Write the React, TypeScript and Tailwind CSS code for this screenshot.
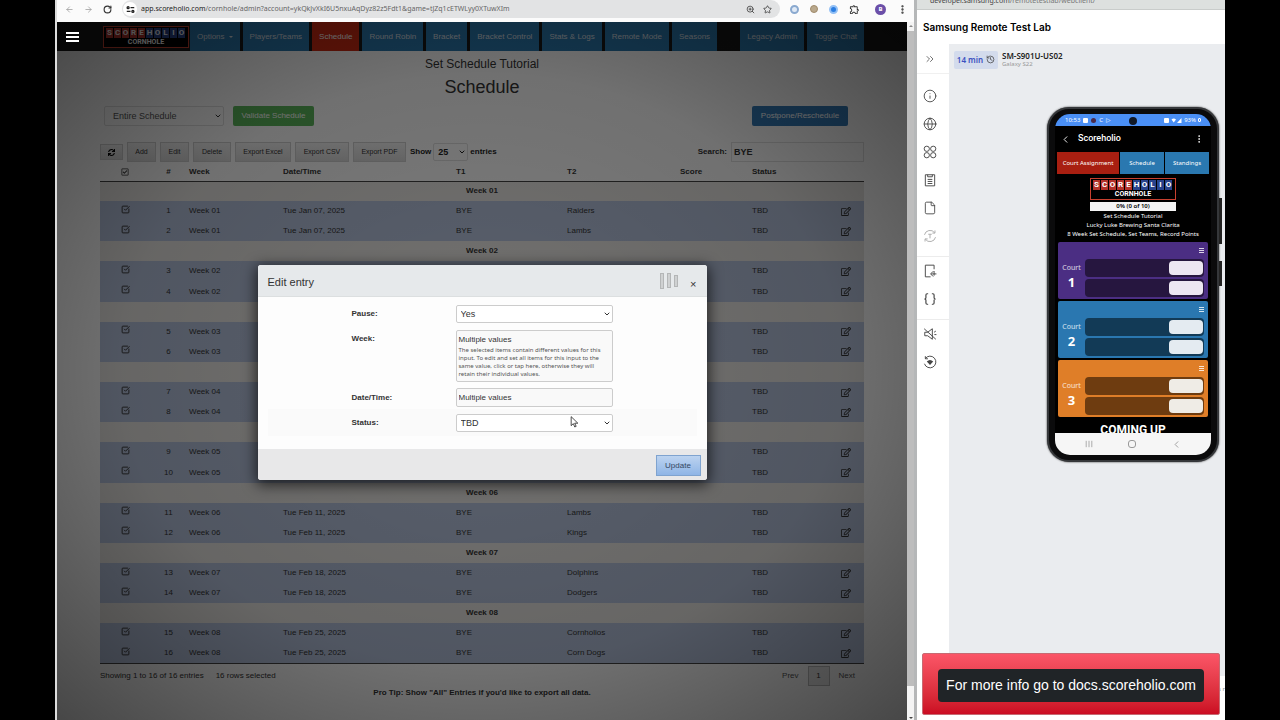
import { ReactNode } from "react"
import {
  ArrowLeft, ArrowRight, Braces, ChevronDown, ChevronLeft, ChevronsRight, EllipsisVertical,
  File, Globe, History, Info, RotateCw, SquareCheckBig, Star, ZoomIn,
} from "lucide-react"
import { FaRegCheckSquare, FaRegEdit, FaSync } from "react-icons/fa"
import { MdOutlineExtension } from "react-icons/md"

const navItems = ["Players/Teams", "Schedule", "Round Robin", "Bracket", "Bracket Control", "Stats & Logs", "Remote Mode", "Seasons"]

const weeks = [
  { week: "Week 01", date: "Tue Jan 07, 2025", teams: ["Raiders", "Lambs"] },
  { week: "Week 02", date: "Tue Jan 14, 2025", teams: ["Kings", "Dolphins"] },
  { week: "Week 03", date: "Tue Jan 21, 2025", teams: ["Dodgers", "Cornholios"] },
  { week: "Week 04", date: "Tue Jan 28, 2025", teams: ["Corn Dogs", "Raiders"] },
  { week: "Week 05", date: "Tue Feb 04, 2025", teams: ["Raiders", "Dolphins"] },
  { week: "Week 06", date: "Tue Feb 11, 2025", teams: ["Lambs", "Kings"] },
  { week: "Week 07", date: "Tue Feb 18, 2025", teams: ["Dolphins", "Dodgers"] },
  { week: "Week 08", date: "Tue Feb 25, 2025", teams: ["Cornholios", "Corn Dogs"] },
]

const courts = [
  { n: 1, card: "bg-[#4b2e83]", slot: "bg-[#26163f]", score: "bg-[#ece6f2]" },
  { n: 2, card: "bg-[#2a77b0]", slot: "bg-[#123a56]", score: "bg-[#e4ebf1]" },
  { n: 3, card: "bg-[#df7e28]", slot: "bg-[#6e3c10]", score: "bg-[#efece6]" },
]

function Logo() {
  return (
    <div className="flex h-[22px] w-[86px] shrink-0 flex-col items-center justify-center gap-px border border-[#c8402f] bg-black font-['Roboto']">
      <div className="flex">
        {"SCOREHOLIO".split("").map((c, i) => (
          <span
            key={i}
            className={`w-[8px] border-r border-black text-center text-[8px] leading-[10px] font-bold text-white ${i < 5 ? "bg-[#b3322a]" : "bg-[#28438c]"}`}
          >
            {c}
          </span>
        ))}
      </div>
      <span className="text-[7px] leading-[7px] font-bold text-white">CORNHOLE</span>
    </div>
  )
}

function Select({ id, label, value, className }: { id: string; label?: string; value: string; className: string }) {
  return (
    <span className="relative inline-flex">
      <select id={id} aria-label={label} className={`appearance-none rounded-[2px] border ${className}`}>
        <option>{value}</option>
      </select>
      <ChevronDown className="pointer-events-none absolute top-1/2 right-[2px] h-2 w-2 -translate-y-1/2" strokeWidth={3} />
    </span>
  )
}

function ToolButton({ children, label, className }: { children: ReactNode; label?: string; className: string }) {
  return (
    <button
      aria-label={label}
      className={`flex items-center justify-center border border-[#d0d0d0] bg-linear-to-b from-[#f4f4f4] to-[#dadada] text-[7px] ${className}`}
    >
      {children}
    </button>
  )
}

function BrowserBar() {
  return (
    <div className="flex h-[22px] shrink-0 items-center bg-[#fbfbfb] pb-1 font-['Noto_Sans'] text-[#333]">
      <div className="flex w-[65px] items-center justify-between pr-[10px] pl-2">
        <ArrowLeft className="h-[9px] w-[9px] text-[#999]" />
        <ArrowRight className="h-[9px] w-[9px] text-[#999]" />
        <RotateCw className="h-[9px] w-[9px]" strokeWidth={3} />
      </div>
      <div className="flex h-[18px] min-w-0 flex-1 items-center rounded-full bg-[#e2e3e4] pr-2 pl-px">
        <span className="mr-1 flex h-[14px] w-[14px] items-center justify-center rounded-full bg-white">
          <svg viewBox="0 0 12 12" className="h-[9px] w-[9px]" fill="none" stroke="#222" strokeWidth="1.8">
            <path d="M6 3.5h5M1 8.5h5" />
            <circle cx="2.8" cy="3.5" r="1.3" />
            <circle cx="9.2" cy="8.5" r="1.3" />
          </svg>
        </span>
        <span className="flex-1 truncate text-[7px] leading-[14px] text-[#666]">
          <span className="text-[#222]">app.scoreholio.com</span>
          /cornhole/admin?account=ykQkJvXkI6U5nxuAqDyz82z5Fdt1&amp;game=tJZq1cETWLyy0XTuwXIm
        </span>
        <ZoomIn className="mr-2 h-[9px] w-[9px]" />
        <Star className="h-[9px] w-[9px]" />
      </div>
      <div className="flex items-center gap-[11px] pr-[6px] pl-[10px]">
        <span className="h-[9px] w-[9px] rounded-full border-2 border-[#8aa9cf] bg-[#dfe9f5]" />
        <span className="h-[8px] w-[8px] rounded-full border border-[#a08b6c] bg-[#b9a88c]" />
        <span className="h-[9px] w-[9px] rounded-full border-2 border-[#93c0f5] bg-[#2a7de1]" />
        <MdOutlineExtension className="h-[11px] w-[11px]" />
        <span className="ml-1 flex h-[11px] w-[11px] items-center justify-center rounded-full bg-[#6b4fa8] text-[6px] font-bold text-white">B</span>
        <EllipsisVertical className="h-[11px] w-[11px]" strokeWidth={3} />
      </div>
    </div>
  )
}

function Navbar() {
  return (
    <nav className="flex h-[29px] items-stretch bg-[#161616] text-[8px] text-[#d8dee3]">
      <div className="flex w-[46px] items-center pl-[9px]">
        <button aria-label="Menu" className="relative z-20 flex flex-col gap-[2px]">
          <span className="h-[2px] w-[13px] bg-white" />
          <span className="h-[2px] w-[13px] bg-white" />
          <span className="h-[2px] w-[13px] bg-white" />
        </button>
      </div>
      <div className="flex items-center pr-px">
        <Logo />
      </div>
      <div className="flex gap-[3px] whitespace-nowrap">
        <a href="#options" className="flex items-center gap-1 bg-[#2a78ad] px-[7px]">
          Options
          <span className="border-x-2 border-t-2 border-x-transparent" />
        </a>
        {navItems.map(item => (
          <a
            key={item}
            href="#section"
            className={`flex items-center px-[7px] ${item === "Schedule" ? "bg-[#cf2a12] text-white" : "bg-[#2a78ad]"}`}
          >
            {item}
          </a>
        ))}
        <a href="#legacy" className="ml-5 flex items-center bg-[#2a78ad] px-[7px]">Legacy Admin</a>
        <a href="#chat" className="flex items-center bg-[#2a78ad] px-[7px]">Toggle Chat</a>
      </div>
    </nav>
  )
}

function ScheduleTable() {
  return (
    <table className="mt-px h-[501px] w-full table-fixed border-b border-[#444] text-left">
      <colgroup>
        <col className="w-[50px]" />
        <col className="w-[37px]" />
        <col className="w-[94px]" />
        <col />
        <col className="w-[111px]" />
        <col className="w-[113px]" />
        <col className="w-[72px]" />
        <col className="w-[77px]" />
        <col className="w-[37px]" />
      </colgroup>
      <thead>
        <tr className="h-[18px] border-b border-[#444]">
          <th>
            <label className="flex justify-center">
              <input type="checkbox" aria-label="Select all" defaultChecked className="sr-only" />
              <FaRegCheckSquare className="h-2 w-2" />
            </label>
          </th>
          <th className="text-center">#</th>
          <th className="px-[2px]">Week</th>
          <th className="px-[2px]">Date/Time</th>
          <th className="px-[2px]">T1</th>
          <th className="px-[2px]">T2</th>
          <th className="px-[2px]">Score</th>
          <th className="px-[2px]">Status</th>
          <th />
        </tr>
      </thead>
      {weeks.map((w, i) => (
        <tbody key={w.week}>
          <tr className="h-5 bg-[#e9e7e4]">
            <th colSpan={9} className="text-center">{w.week}</th>
          </tr>
          {w.teams.map((team, j) => (
            <tr key={team} className="h-5 bg-[#b6c3dd]">
              <td>
                <label className="flex justify-center pb-1">
                  <input type="checkbox" aria-label={`Select ${i * 2 + j + 1}`} defaultChecked className="sr-only" />
                  <SquareCheckBig className="h-[9px] w-[9px]" strokeWidth={2.5} />
                </label>
              </td>
              <td className="text-center">{i * 2 + j + 1}</td>
              <td className="px-[2px]">{w.week}</td>
              <td className="px-[2px]">{w.date}</td>
              <td className="px-[2px]">BYE</td>
              <td className="px-[2px]">{team}</td>
              <td />
              <td className="px-[2px]">TBD</td>
              <td>
                <button aria-label="Edit row" className="mx-auto block">
                  <FaRegEdit className="h-[9px] w-[10px]" />
                </button>
              </td>
            </tr>
          ))}
        </tbody>
      ))}
    </table>
  )
}

function EditModal() {
  return (
    <form className="relative flex h-[215px] w-[449px] flex-col overflow-hidden rounded-[3px] bg-[#fdfdfd] text-[8px] text-[#333] shadow-[0_3px_14px_2px_rgba(0,0,0,0.65)]">
      <div className="flex h-8 items-center border-b border-[#dcdfe0] bg-[#e6e9eb] px-[10px]">
        <h2 className="flex-1 pt-[2px] text-[11px]">Edit entry</h2>
        <div className="mr-3 flex items-center gap-[3px]">
          <span className="h-4 w-1 border border-[#b4b6b7] bg-[#cfd1d2]" />
          <span className="h-[15px] w-1 border border-[#b4b6b7] bg-[#cfd1d2]" />
          <span className="h-3 w-1 border border-[#b4b6b7] bg-[#cfd1d2]" />
        </div>
        <button type="button" aria-label="Close" className="pt-2 text-[11px] leading-[11px]">×</button>
      </div>
      <div className="flex flex-1 flex-col px-[10px] pt-1">
        <div className="flex h-[25px] items-center pl-[84px]">
          <label htmlFor="pause" className="w-[104px] font-bold">Pause:</label>
          <Select id="pause" value="Yes" className="h-[18px] w-[157px] border-[#ccc] bg-white pl-1 text-[9px]" />
        </div>
        <div className="flex h-[60px] items-start pt-1 pl-[84px]">
          <span className="w-[104px] pt-1 font-bold">Week:</span>
          <button type="button" className="h-[52px] w-[157px] rounded-[2px] border border-[#ccc] bg-[#f9f9f9] pl-[2px] text-left whitespace-nowrap">
            <span className="block leading-[10px]">Multiple values</span>
            <span className="block pt-px font-['Noto_Sans'] text-[6px] leading-[8px] text-[#555]">
              The selected items contain different values for this
              <br />
              input. To edit and set all items for this input to the
              <br />
              same value, click or tap here, otherwise they will
              <br />
              retain their individual values.
            </span>
          </button>
        </div>
        <div className="flex h-[23px] items-center pl-[84px]">
          <label htmlFor="date" className="w-[104px] font-bold">Date/Time:</label>
          <input id="date" readOnly value="Multiple values" className="h-[19px] w-[157px] rounded-[2px] border border-[#ccc] bg-[#f9f9f9] px-[2px]" />
        </div>
        <div className="flex h-[27px] items-center bg-[#fafafa] pl-[84px]">
          <label htmlFor="status" className="w-[104px] font-bold">Status:</label>
          <Select id="status" value="TBD" className="h-[18px] w-[157px] border-[#ccc] bg-white pl-1 text-[9px]" />
        </div>
      </div>
      <div className="flex h-[31px] items-center justify-end bg-[#e8e8e9] px-[6px] pt-[2px]">
        <button type="button" className="h-[21px] w-[45px] border border-[#7fa3cf] bg-linear-to-b from-[#bcd3f0] to-[#8fb5e6] text-[#33475f]">
          Update
        </button>
      </div>
      <svg viewBox="0 0 12 18" className="absolute top-[151px] left-[312px] h-[12px] w-[9px]" fill="white" stroke="#222" strokeWidth="1.2">
        <path d="M1 1v13.5l3.2-3 2.2 5 2.1-1-2.2-4.7H11z" />
      </svg>
    </form>
  )
}

function AdminWindow() {
  return (
    <section className="flex min-w-0 flex-1 flex-col border-l-2 border-[#ddd]">
      <BrowserBar />
      <div className="flex min-h-0 flex-1">
        <div className="relative min-w-0 flex-1 overflow-hidden bg-white font-['Liberation_Sans',sans-serif] text-[8px] leading-[10px] text-[#333]">
          <Navbar />
          <main className="px-[43px]">
            <p className="pt-[6px] text-center text-[12px] leading-[14px]">Set Schedule Tutorial</p>
            <h1 className="mt-[5px] text-center text-[18px] leading-[22px]">Schedule</h1>
            <div className="mt-2 flex items-center gap-[9px]">
              <Select id="range" label="Schedule range" value="Entire Schedule" className="ml-1 h-5 w-[120px] border-[#e0e0e0] pl-2 text-[9px] text-[#555]" />
              <button className="h-5 w-[81px] rounded-[2px] bg-[#5cb85c] text-white">Validate Schedule</button>
              <button className="mr-4 ml-auto h-5 w-[96px] rounded-[2px] bg-[#337ab7] text-white">Postpone/Reschedule</button>
            </div>
            <div className="mt-4 flex h-5 items-center gap-1">
              <ToolButton label="Refresh" className="h-4 w-[23px]"><FaSync className="h-[7px] w-[7px] text-black" /></ToolButton>
              <ToolButton className="h-5 w-[29px]">Add</ToolButton>
              <ToolButton className="h-5 w-[29px]">Edit</ToolButton>
              <ToolButton className="h-5 w-[38px]">Delete</ToolButton>
              <ToolButton className="h-5 w-[56px]">Export Excel</ToolButton>
              <ToolButton className="h-5 w-[54px]">Export CSV</ToolButton>
              <ToolButton className="h-5 w-[53px]">Export PDF</ToolButton>
              <div className="flex items-center gap-[2px] font-bold text-[#222]">
                <label htmlFor="length">Show</label>
                <Select id="length" value="25" className="h-[18px] w-[35px] border-[#e0e0e0] pl-1 text-[9px] font-bold" />
                <span>entries</span>
              </div>
              <label htmlFor="search" className="ml-auto font-bold">Search:</label>
              <input id="search" defaultValue="BYE" className="h-5 w-[133px] border border-[#e0e0e0] bg-transparent px-[2px] text-[9px] font-bold" />
            </div>
            <ScheduleTable />
            <div className="mt-[2px] flex items-center">
              <span>Showing 1 to 16 of 16 entries</span>
              <span className="ml-3">16 rows selected</span>
              <button className="ml-auto text-[#555]">Prev</button>
              <button className="mx-[9px] h-5 w-[22px] border border-[#bbb] bg-[#e8e8e8]">1</button>
              <button className="mr-[9px] text-[#555]">Next</button>
            </div>
            <p className="mt-[2px] text-center font-bold">Pro Tip: Show "All" Entries if you'd like to export all data.</p>
          </main>
          {/* dimmed backdrop with the edit dialog on top */}
          <div className="absolute inset-0 z-10 flex items-start justify-center bg-[radial-gradient(ellipse_farthest-corner_at_center,rgba(0,0,0,0.5)_0%,rgba(0,0,0,0.56)_60%,rgba(0,0,0,0.62)_75%,rgba(0,0,0,0.72)_100%)] pt-[243px]">
            <EditModal />
          </div>
        </div>
        <div className="flex w-[7px] flex-col items-center bg-[#f4f4f4]">
          <span className="mt-[3px] mb-1 border-x-2 border-b-2 border-x-transparent border-b-[#888]" />
          <span className="w-full flex-1 bg-[#bdbdbd]" />
          <span className="mt-[31px] mb-px border-x-2 border-t-2 border-x-transparent border-t-[#444]" />
        </div>
      </div>
    </section>
  )
}

function SidebarIcons() {
  const line = { viewBox: "0 0 24 24", fill: "none", stroke: "currentColor", strokeWidth: 1.6, className: "h-[14px] w-[14px]" }
  const groups: { name: string; icon: ReactNode }[][] = [
    [
      { name: "Info", icon: <Info className="h-[14px] w-[14px]" strokeWidth={1.5} /> },
      {
        name: "Language",
        icon: <Globe className="h-[14px] w-[14px]" strokeWidth={1.5} />,
      },
      {
        name: "Apps",
        icon: (
          <svg {...line}>
            <circle cx="6.5" cy="6.5" r="4.5" /><circle cx="17.5" cy="6.5" r="4.5" />
            <circle cx="6.5" cy="17.5" r="4.5" /><circle cx="17.5" cy="17.5" r="4.5" />
          </svg>
        ),
      },
      {
        name: "Clipboard",
        icon: (
          <svg {...line}>
            <path d="M4 3h16v19H4zM8 3v3.500h8V3M8 11h8M8 14.500h8M8 18h8" />
          </svg>
        ),
      },
      { name: "Files", icon: <File className="h-[14px] w-[14px]" strokeWidth={1.5} /> },
      {
        name: "Rotate text",
        icon: (
          <svg {...line} className="h-[14px] w-[14px] text-[#aaa]">
            <path d="M2.500 10A9.800 9.800 0 0 1 20 6.500M20.500 2.500v4.500H16M21.500 14A9.800 9.800 0 0 1 4 17.500M3.500 21.500V17H8M9 9h6M12 9v7" />
          </svg>
        ),
      },
    ],
    [
      {
        name: "Install",
        icon: (
          <svg {...line}>
            <path d="M19 9V2H4v20h9M14 17h9M17.500 12.500 13 17l4.500 4.500M19 12v8" />
          </svg>
        ),
      },
      { name: "Logs", icon: <Braces className="h-[14px] w-[14px]" strokeWidth={2} /> },
    ],
    [
      {
        name: "Mute",
        icon: (
          <svg {...line}>
            <path d="M3 9h5l8-6v18l-8-6H3zM2 3l20 18M19 9l3-2M19.500 13H23" />
          </svg>
        ),
      },
      {
        name: "Network",
        icon: (
          <svg {...line}>
            <path d="M4 6a10 10 0 1 1-1.500 9M4 2v4.500h4.500" />
            <path d="M6.500 11a8 8 0 0 1 11 0L12 17z" fill="currentColor" stroke="none" />
          </svg>
        ),
      },
    ],
  ]

  return (
    <aside className="flex w-8 shrink-0 flex-col bg-white text-[#444]">
      <button aria-label="Expand" className="flex h-[30px] items-center justify-center border-b border-[#f0f0f0] pr-[7px]">
        <ChevronsRight className="h-[12px] w-[12px]" strokeWidth={1.5} />
      </button>
      <div className="mt-[6px] flex flex-col gap-[6px]">
        {groups.map((group, i) => (
          <div key={i} className={i > 0 ? "border-t border-[#ececec]" : "pt-[2px]"}>
            {group.map(item => (
              <button key={item.name} aria-label={item.name} className="flex h-7 w-full items-center justify-center pr-[7px]">
                {item.icon}
              </button>
            ))}
          </div>
        ))}
      </div>
    </aside>
  )
}

function Phone() {
  return (
    <div className="relative w-[172px] rounded-[22px] border-2 border-[#35373a] bg-[#0b0b0c] px-[6px] py-[5px] shadow-[0_0_2px_#222]">
      <span className="absolute top-[89px] -right-[5px] h-[46px] w-[3px] bg-[#222]" />
      <span className="absolute top-[152px] -right-[5px] h-[25px] w-[3px] bg-[#222]" />
      <div className="flex h-[341px] flex-col overflow-hidden rounded-[15px] bg-black font-['Noto_Sans'] text-white">
        <div className="relative flex h-[12px] shrink-0 items-center justify-between bg-[#4a8ff5] px-[10px] text-[6px]">
          <span className="flex items-center gap-[3px]">
            10:53
            <span className="h-[5px] w-[5px] rounded-[1px] bg-white" />
            <span className="h-[5px] w-[5px] rounded-full bg-[#4a2a4a]" />
            <span>C</span>
            <span>▷</span>
          </span>
          <span className="absolute top-[3px] left-[74px] h-2 w-2 rounded-full bg-[#101826]" />
          <span className="flex items-center gap-[2px]">
            <span className="h-[5px] w-[5px] rounded-[1px] bg-white" />
            <svg viewBox="0 0 20 10" className="h-[5px] w-[11px]" fill="white">
              <path d="M0 3a7 7 0 0 1 9 0L4.500 9zM20 0v10H11z" />
            </svg>
            93%
            <span className="h-1 w-[3px] rounded-[1px] border border-white" />
          </span>
        </div>
        <div className="flex h-[26px] shrink-0 items-center px-[5px]">
          <ChevronLeft className="h-[11px] w-[11px]" />
          <span className="ml-[7px] flex-1 font-['Roboto'] text-[9px] font-medium">Scoreholio</span>
          <EllipsisVertical className="mr-[2px] h-[10px] w-[10px]" />
        </div>
        <div className="flex h-[22px] shrink-0 gap-px px-[2px] text-[6px]">
          <a href="#court" className="flex w-[62px] items-center justify-center bg-[#a81f11]">Court Assignment</a>
          <a href="#sched" className="flex flex-1 items-center justify-center bg-[#2a78b0]">Schedule</a>
          <a href="#stand" className="flex flex-1 items-center justify-center bg-[#2a78b0]">Standings</a>
        </div>
        <div className="mx-[3px] flex h-[66px] shrink-0 flex-col items-center pt-1 text-[6px] leading-[9px] whitespace-nowrap">
          <Logo />
          <span className="mt-[2px] mb-px h-[9px] w-[86px] bg-[#f5f5f5] text-center text-[6px] leading-[9px] font-semibold text-black">0% (0 of 10)</span>
          <span>Set Schedule Tutorial</span>
          <span>Lucky Luke Brewing Santa Clarita</span>
          <span>8 Week Set Schedule, Set Teams, Record Points</span>
        </div>
        <div className="mx-[3px] mt-[2px] flex flex-1 flex-col gap-[2px] overflow-hidden">
          {courts.map(c => (
            <div key={c.n} className={`flex h-[57px] shrink-0 flex-col rounded-[2px] px-1 ${c.card}`}>
              <div className="flex h-[17px] items-center justify-end">
                <span className="flex flex-col gap-px">
                  <span className="h-px w-[5px] bg-white/80" />
                  <span className="h-px w-[5px] bg-white/80" />
                  <span className="h-px w-[5px] bg-white/80" />
                </span>
              </div>
              <div className="flex">
                <div className="flex w-[23px] flex-col items-center pt-1 pr-1">
                  <span className="text-[7px] leading-[9px] text-white/80">Court</span>
                  <span className="mt-px text-[13px] leading-[18px] font-bold">{c.n}</span>
                </div>
                <div className="flex flex-1 flex-col gap-[2px]">
                  {[0, 1].map(k => (
                    <div key={k} className={`flex h-[18px] items-center justify-end rounded-[4px] pr-px ${c.slot}`}>
                      <span className={`h-[14px] w-[34px] rounded-[4px] ${c.score}`} />
                    </div>
                  ))}
                </div>
              </div>
            </div>
          ))}
          <div className="shrink-0 pt-1 text-center font-['Roboto'] text-[12px] leading-[14px] font-bold">COMING UP</div>
        </div>
        <div className="flex h-[22px] shrink-0 items-center justify-around bg-[#f6f6f6] px-3 text-[#999]">
          <svg viewBox="0 0 10 10" className="h-[8px] w-[8px]" stroke="currentColor"><path d="M1.500 1v8M5 1v8M8.500 1v8" /></svg>
          <span className="h-[8px] w-[8px] rounded-[3px] border border-current" />
          <ChevronLeft className="h-[11px] w-[11px]" />
        </div>
      </div>
    </div>
  )
}

function TestLabWindow() {
  return (
    <section className="relative flex w-[311px] shrink-0 flex-col overflow-hidden border-l-3 border-[#b5b7b8] bg-white font-['Noto_Sans']">
      <div className="flex h-[10px] shrink-0 items-start overflow-hidden border-b border-[#c9cccb] bg-[#dde0df] pl-[13px] text-[7px] leading-[10px] text-[#777]">
        <span className="-mt-1"><span className="text-[#444]">developer.samsung.com</span>/remotetestlab/webclient/</span>
      </div>
      <h1 className="flex h-[34px] shrink-0 items-center pl-[6px] font-['Inter'] text-[10px] font-semibold text-black">Samsung Remote Test Lab</h1>
      <div className="flex min-h-0 flex-1">
        <SidebarIcons />
        <div className="flex min-w-0 flex-1 flex-col bg-[#eaecef]">
          <div className="flex h-[31px] items-center gap-1 pl-[5px]">
            <span className="flex h-[18px] w-[44px] items-center justify-center gap-[3px] rounded-[2px] bg-[#d3dbec] text-[8px] font-semibold text-[#3a50c0]">
              14 min
              <History className="h-[9px] w-[9px] text-[#444]" />
            </span>
            <div>
              <p className="text-[8px] leading-[9px] font-semibold text-[#222]">SM-S901U-US02</p>
              <p className="text-[6px] leading-[9px] text-[#999]">Galaxy S22</p>
            </div>
          </div>
          <div className="mt-8 pl-[98px]">
            <Phone />
          </div>
          <p className="mt-auto h-11 bg-white pt-[9px] text-right text-[6px] text-[#888]">s r</p>
        </div>
      </div>
      <div className="absolute inset-x-[5px] bottom-[5px] flex h-[62px] items-center justify-center rounded-[2px] border border-[#c76a72] bg-linear-to-b from-[#fb5567] to-[#cb0b22] pt-[2px]">
        <p className="rounded-[4px] bg-[#202427] px-2 py-[6px] font-['Liberation_Sans',sans-serif] text-[14px] leading-[21px] whitespace-nowrap text-white">
          For more info go to docs.scoreholio.com
        </p>
      </div>
    </section>
  )
}

export default function App() {
  return (
    <div className="flex h-screen overflow-hidden bg-black px-[55px]">
      <AdminWindow />
      <TestLabWindow />
    </div>
  )
}
